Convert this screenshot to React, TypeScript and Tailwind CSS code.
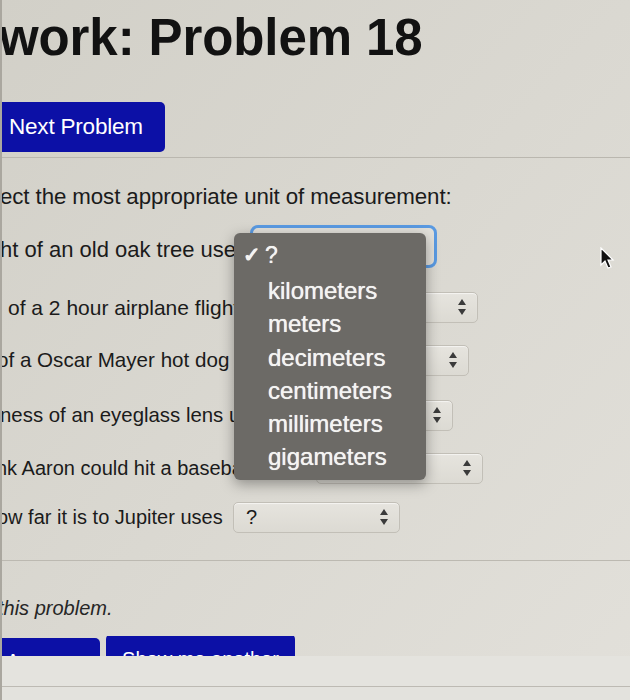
import React from 'react';

const Arrows = () => (
  <svg width="10" height="18" viewBox="0 0 10 18" className="shrink-0">
    <path d="M5 1 L9 7 L1 7 Z" fill="#3b3b3b" />
    <path d="M1 11 L9 11 L5 17 Z" fill="#3b3b3b" />
  </svg>
);

const Select = ({ left, text = '' }: { left: number; text?: string }) => (
  <div
    className="h-[31px] w-[167px] shrink-0 flex items-center justify-between pl-[12px] pr-[10px] rounded-[5px] border border-[#c2bfb7] bg-gradient-to-b from-[#e6e4de] to-[#dcdad3] shadow-[inset_0_1px_1px_rgba(255,255,255,0.6)]"
    style={{ marginLeft: left }}
  >
    <span className="text-[20px] leading-none">{text}</span>
    <Arrows />
  </div>
);

type Row = { label: string; labelLeft: number; selectLeft: number; mt: string; size: string; focused?: boolean };

const rows: Row[] = [
  { label: 'ht of an old oak tree uses', labelLeft: 0, selectLeft: 250, mt: 'mt-[18px]', size: 'text-[22px]', focused: true },
  { label: 'of a 2 hour airplane flight uses', labelLeft: 8, selectLeft: 311, mt: 'mt-[13px]', size: 'text-[21px]' },
  { label: 'of a Oscar Mayer hot dog uses', labelLeft: -3, selectLeft: 302, mt: 'mt-[9px]', size: 'text-[20.6px]' },
  { label: 'ness of an eyeglass lens uses', labelLeft: 0, selectLeft: 286, mt: 'mt-[11px]', size: 'text-[20.4px]' },
  { label: 'nk Aaron could hit a baseball uses', labelLeft: -4, selectLeft: 316, mt: 'mt-[9px]', size: 'text-[20px]' },
];

const menuItems = ['kilometers', 'meters', 'decimeters', 'centimeters', 'millimeters', 'gigameters'];

export default function App() {
  return (
    <div className="relative w-[630px] h-[700px] overflow-hidden bg-gradient-to-br from-[#d2d0c8] via-[#dad8d1] to-[#e2e0da] text-[#1b1b1b] font-['Liberation_Sans',Arial,sans-serif] border-l-2 border-[#aaa79f]">
      <h1 className="pt-[12px] -ml-[3px] text-[51px] leading-none font-bold text-[#121212] whitespace-nowrap tracking-[-0.1px]">
        work: Problem 18
      </h1>

      <div className="mt-[39px] -ml-[2px] h-[50px] w-[165px] rounded-r-[5px] bg-[#0c10a6] flex items-center pl-[9px]">
        <span className="text-white text-[22.5px] leading-none tracking-[-0.2px]">Next Problem</span>
      </div>

      <div className="mt-[5px] border-t border-[#bab7af]" />

      <p className="mt-[26px] -ml-[2px] text-[22.3px] leading-[26px] whitespace-nowrap tracking-[-0.1px]">
        ect the most appropriate unit of measurement:
      </p>

      {rows.map((r) => (
        <div key={r.label} className={`${r.mt} h-[44px] flex items-center -ml-[2px]`}>
          <div className={`w-0 whitespace-nowrap leading-none ${r.size}`} style={{ marginLeft: r.labelLeft }}>
            {r.label}
          </div>
          {r.focused ? (
            <div
              className="h-[43px] w-[187px] -mt-[7px] shrink-0 rounded-[8px] border-[3px] border-[#5a9ae2] bg-[#e2e0da]"
              style={{ marginLeft: r.selectLeft - r.labelLeft }}
            />
          ) : (
            <Select left={r.selectLeft - r.labelLeft} />
          )}
        </div>
      ))}

      <div className="mt-[5px] h-[44px] flex items-center -ml-[2px]">
        <div className="w-0 whitespace-nowrap text-[20px] leading-none -ml-[3px]">ow far it is to Jupiter uses</div>
        <Select left={236} text="?" />
      </div>

      <div className="mt-[21px] border-t border-[#bcb9b1]" />

      <p className="mt-[35px] -ml-[4px] text-[20px] leading-[24px] italic whitespace-nowrap text-[#262626]">this problem.</p>

      <div className="mt-[16px] -ml-[2px] h-[20px] overflow-hidden flex gap-[6px]">
        <div className="h-[46px] w-[100px] shrink-0 mt-[2px] rounded-r-[5px] bg-[#0c10a6] flex items-center justify-end pr-[17px] overflow-hidden">
          <span className="text-white text-[20px] leading-none whitespace-nowrap">Submit Answers</span>
        </div>
        <div className="h-[46px] w-[189px] shrink-0 -mt-[2px] rounded-[5px] bg-[#0c10a6] flex items-center justify-center pt-[4px]">
          <span className="text-white text-[20px] leading-none whitespace-nowrap">Show me another</span>
        </div>
      </div>

      <div className="h-[30px] bg-[#e4e3de]" />
      <div className="h-[20px] border-t border-[#bdbab3] bg-[#e3e2dd]" />

      {/* open dropdown menu */}
      <div className="absolute left-[232px] top-[233px] w-[192px] h-[247px] rounded-[6px] bg-[#6c6a66] shadow-[0_4px_14px_rgba(0,0,0,0.35)] pt-[5px] text-[#f4f4f2] [text-shadow:0_0_0.7px_#fff]">
        <div className="flex items-center h-[33.6px] mb-[3px] text-[23px]">
          <span className="w-[31px] pl-[9px] text-[21px] font-bold">✓</span>
          <span>?</span>
        </div>
        {menuItems.map((m) => (
          <div key={m} className="flex items-center h-[33.2px] pl-[34px] text-[24px]">
            {m}
          </div>
        ))}
      </div>

      {/* mouse pointer */}
      <svg className="absolute left-[597px] top-[247px]" width="16" height="24" viewBox="0 0 16 24">
        <path d="M2 1 L2 18 L6 14 L9 21 L12 20 L9 13 L14 13 Z" fill="#111" stroke="#fff" strokeWidth="1.2" />
      </svg>
    </div>
  );
}
